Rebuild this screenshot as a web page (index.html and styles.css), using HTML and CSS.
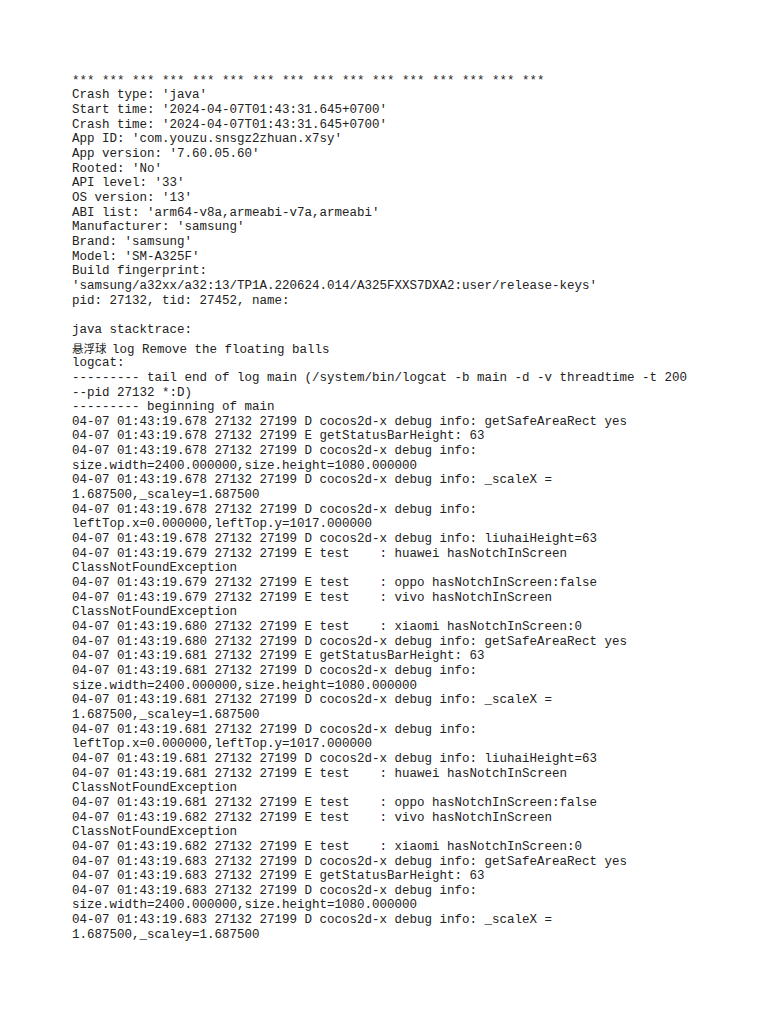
FILE: index.html
```html
<!DOCTYPE html>
<html lang="en">
<head>
<meta charset="utf-8">
<title>Crash log</title>
<link rel="stylesheet" href="styles.css">
</head>
<body>
<main class="log">
<div class="line">*** *** *** *** *** *** *** *** *** *** *** *** *** *** *** ***</div>
<div class="line">Crash type: 'java'</div>
<div class="line">Start time: '2024-04-07T01:43:31.645+0700'</div>
<div class="line">Crash time: '2024-04-07T01:43:31.645+0700'</div>
<div class="line">App ID: 'com.youzu.snsgz2zhuan.x7sy'</div>
<div class="line">App version: '7.60.05.60'</div>
<div class="line">Rooted: 'No'</div>
<div class="line">API level: '33'</div>
<div class="line">OS version: '13'</div>
<div class="line">ABI list: 'arm64-v8a,armeabi-v7a,armeabi'</div>
<div class="line">Manufacturer: 'samsung'</div>
<div class="line">Brand: 'samsung'</div>
<div class="line">Model: 'SM-A325F'</div>
<div class="line">Build fingerprint:</div>
<div class="line">'samsung/a32xx/a32:13/TP1A.220624.014/A325FXXS7DXA2:user/release-keys'</div>
<div class="line">pid: 27132, tid: 27452, name:</div>
<div class="line"> </div>
<div class="line">java stacktrace:</div>
<div class="line cjk"><span class="zh">悬浮球</span>log Remove the floating balls</div>
<div class="line">logcat:</div>
<div class="line">--------- tail end of log main (/system/bin/logcat -b main -d -v threadtime -t 200</div>
<div class="line">--pid 27132 *:D)</div>
<div class="line">--------- beginning of main</div>
<div class="line">04-07 01:43:19.678 27132 27199 D cocos2d-x debug info: getSafeAreaRect yes</div>
<div class="line">04-07 01:43:19.678 27132 27199 E getStatusBarHeight: 63</div>
<div class="line">04-07 01:43:19.678 27132 27199 D cocos2d-x debug info:</div>
<div class="line">size.width=2400.000000,size.height=1080.000000</div>
<div class="line">04-07 01:43:19.678 27132 27199 D cocos2d-x debug info: _scaleX =</div>
<div class="line">1.687500,_scaley=1.687500</div>
<div class="line">04-07 01:43:19.678 27132 27199 D cocos2d-x debug info:</div>
<div class="line">leftTop.x=0.000000,leftTop.y=1017.000000</div>
<div class="line">04-07 01:43:19.678 27132 27199 D cocos2d-x debug info: liuhaiHeight=63</div>
<div class="line">04-07 01:43:19.679 27132 27199 E test    : huawei hasNotchInScreen</div>
<div class="line">ClassNotFoundException</div>
<div class="line">04-07 01:43:19.679 27132 27199 E test    : oppo hasNotchInScreen:false</div>
<div class="line">04-07 01:43:19.679 27132 27199 E test    : vivo hasNotchInScreen</div>
<div class="line">ClassNotFoundException</div>
<div class="line">04-07 01:43:19.680 27132 27199 E test    : xiaomi hasNotchInScreen:0</div>
<div class="line">04-07 01:43:19.680 27132 27199 D cocos2d-x debug info: getSafeAreaRect yes</div>
<div class="line">04-07 01:43:19.681 27132 27199 E getStatusBarHeight: 63</div>
<div class="line">04-07 01:43:19.681 27132 27199 D cocos2d-x debug info:</div>
<div class="line">size.width=2400.000000,size.height=1080.000000</div>
<div class="line">04-07 01:43:19.681 27132 27199 D cocos2d-x debug info: _scaleX =</div>
<div class="line">1.687500,_scaley=1.687500</div>
<div class="line">04-07 01:43:19.681 27132 27199 D cocos2d-x debug info:</div>
<div class="line">leftTop.x=0.000000,leftTop.y=1017.000000</div>
<div class="line">04-07 01:43:19.681 27132 27199 D cocos2d-x debug info: liuhaiHeight=63</div>
<div class="line">04-07 01:43:19.681 27132 27199 E test    : huawei hasNotchInScreen</div>
<div class="line">ClassNotFoundException</div>
<div class="line">04-07 01:43:19.681 27132 27199 E test    : oppo hasNotchInScreen:false</div>
<div class="line">04-07 01:43:19.682 27132 27199 E test    : vivo hasNotchInScreen</div>
<div class="line">ClassNotFoundException</div>
<div class="line">04-07 01:43:19.682 27132 27199 E test    : xiaomi hasNotchInScreen:0</div>
<div class="line">04-07 01:43:19.683 27132 27199 D cocos2d-x debug info: getSafeAreaRect yes</div>
<div class="line">04-07 01:43:19.683 27132 27199 E getStatusBarHeight: 63</div>
<div class="line">04-07 01:43:19.683 27132 27199 D cocos2d-x debug info:</div>
<div class="line">size.width=2400.000000,size.height=1080.000000</div>
<div class="line">04-07 01:43:19.683 27132 27199 D cocos2d-x debug info: _scaleX =</div>
<div class="line">1.687500,_scaley=1.687500</div>
</main>
</body>
</html>
```

FILE: styles.css
```css
html, body {
  margin: 0;
  padding: 0;
  background: #ffffff;
}

.log {
  padding: 73.7px 0 0 72px;
  font-family: "Liberation Mono", "Noto Sans CJK SC", monospace;
  font-size: 12.5px;
  color: #222222;
}

.line {
  white-space: pre;
  height: 14.67px;
  line-height: 14.67px;
}

.cjk {
  height: 18.7px;
  padding-top: 3.3px;
  box-sizing: border-box;
}

.zh {
  font-family: "Noto Sans CJK SC", sans-serif;
  font-size: 11.5px;
  padding-right: 5.5px;
}
```
